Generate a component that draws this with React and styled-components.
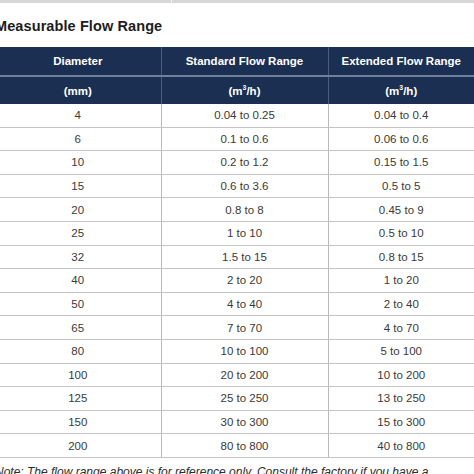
import React from 'react';
import styled, { createGlobalStyle } from 'styled-components';

const GlobalStyle = createGlobalStyle`
  html, body {
    margin: 0;
    padding: 0;
    background: #ffffff;
    overflow: hidden;
  }
  body {
    font-family: 'Liberation Sans', Arial, sans-serif;
  }
`;

const Page = styled.div`
  width: 479px;
  height: 474px;
  margin-left: -5px;
  overflow: hidden;
`;

const TopStrip = styled.div`
  display: grid;
  grid-template-columns: 177px 1fr;
  height: 3px;
  background: #d6d6d6;
`;

const StripCell = styled.div`
  border-right: 1px solid #f2f2f2;
`;

const Title = styled.h2`
  margin: 0;
  padding: 15px 0 0 0;
  height: 29px;
  font-size: 14.5px;
  font-weight: 700;
  color: #1d1d1d;
  letter-spacing: 0.1px;
`;

const Table = styled.table`
  width: 479px;
  border-collapse: collapse;
  table-layout: fixed;
  font-size: 11.5px;
`;

const HeadCell = styled.th`
  background: #1b2f52;
  color: #ffffff;
  font-weight: 700;
  text-align: center;
  height: ${(p) => p.$h}px;
  padding: 0;
  border-left: 1px solid #4a5d80;
  border-bottom: ${(p) => (p.$sep ? '2px solid #6f7f9c' : 'none')};
  &:first-child {
    border-left: none;
  }
`;

const Cell = styled.td`
  height: 22.6px;
  padding: 0;
  text-align: center;
  color: #3a3a3a;
  border-left: 1px solid #b9b9b9;
  border-bottom: 1px solid #c4c4c4;
  &:first-child {
    border-left: none;
  }
`;

const Note = styled.p`
  margin: 0;
  padding-top: 7px;
  font-size: 12px;
  font-style: italic;
  color: #2c2c2c;
  white-space: nowrap;
`;

const rows = [
  ['4', '0.04 to 0.25', '0.04 to 0.4'],
  ['6', '0.1 to 0.6', '0.06 to 0.6'],
  ['10', '0.2 to 1.2', '0.15 to 1.5'],
  ['15', '0.6 to 3.6', '0.5 to 5'],
  ['20', '0.8 to 8', '0.45 to 9'],
  ['25', '1 to 10', '0.5 to 10'],
  ['32', '1.5 to 15', '0.8 to 15'],
  ['40', '2 to 20', '1 to 20'],
  ['50', '4 to 40', '2 to 40'],
  ['65', '7 to 70', '4 to 70'],
  ['80', '10 to 100', '5 to 100'],
  ['100', '20 to 200', '10 to 200'],
  ['125', '25 to 250', '13 to 250'],
  ['150', '30 to 300', '15 to 300'],
  ['200', '80 to 800', '40 to 800'],
];

const App = () => (
  <Page>
    <GlobalStyle />
    <TopStrip>
      <StripCell />
      <div />
    </TopStrip>
    <Title>Measurable Flow Range</Title>
    <Table>
      <colgroup>
        <col style={{ width: 166 }} />
        <col style={{ width: 167 }} />
        <col style={{ width: 146 }} />
      </colgroup>
      <thead>
        <tr>
          <HeadCell $h={28} $sep>Diameter</HeadCell>
          <HeadCell $h={28} $sep>Standard Flow Range</HeadCell>
          <HeadCell $h={28} $sep>Extended Flow Range</HeadCell>
        </tr>
        <tr>
          <HeadCell $h={27}>(mm)</HeadCell>
          <HeadCell $h={27}>
            (m
            <sup style={{ fontSize: '0.6em' }}>3</sup>
            /h)
          </HeadCell>
          <HeadCell $h={27}>
            (m
            <sup style={{ fontSize: '0.6em' }}>3</sup>
            /h)
          </HeadCell>
        </tr>
      </thead>
      <tbody>
        {rows.map((r) => (
          <tr key={r[0]}>
            <Cell>{r[0]}</Cell>
            <Cell>{r[1]}</Cell>
            <Cell>{r[2]}</Cell>
          </tr>
        ))}
      </tbody>
    </Table>
    <Note>Note: The flow range above is for reference only. Consult the factory if you have a</Note>
  </Page>
);

export default App;
